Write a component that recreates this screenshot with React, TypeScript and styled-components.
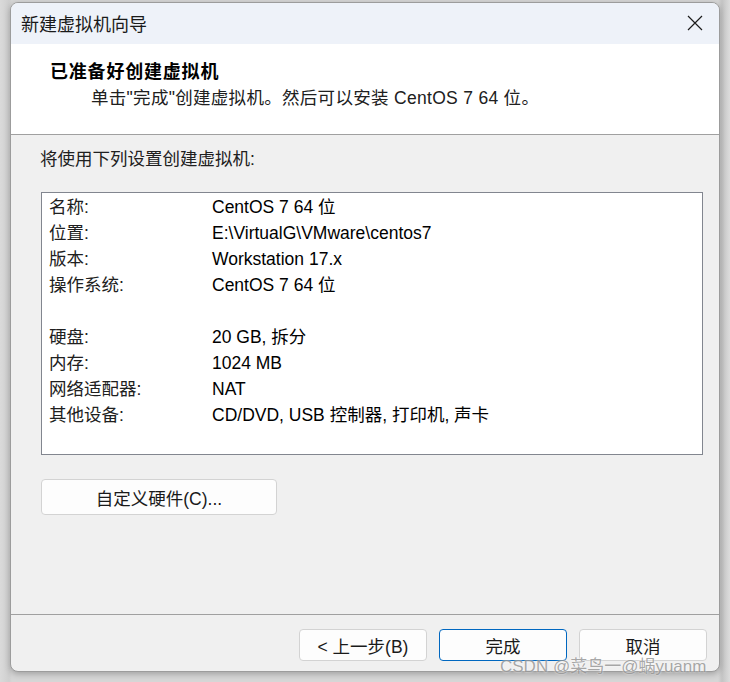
import React from "react";
import styled, { createGlobalStyle } from "styled-components";

const GlobalStyle = createGlobalStyle`
  html, body {
    margin: 0;
    padding: 0;
    width: 730px;
    height: 682px;
    overflow: hidden;
    background: #d3d3d3;
  }
  * { box-sizing: border-box; }
`;

const FONT = `"Liberation Sans", "Noto Sans CJK SC", sans-serif`;

const Desktop = styled.div`
  position: relative;
  width: 730px;
  height: 682px;
  padding: 2px 10px 0 10px;
  background: linear-gradient(90deg, #dadada 0px, #cfcfcf 9px, #d6d6d6 12px, #d6d6d6 718px, #c4c4c4 722px, #dcdcdc 730px);
  font-family: ${FONT};
`;

const Dialog = styled.div`
  width: 710px;
  height: 670px;
  border: 1px solid #9c9c9c;
  border-radius: 8px;
  overflow: hidden;
  display: flex;
  flex-direction: column;
  background: #f0f0f0;
  box-shadow: 0 2px 6px rgba(0, 0, 0, 0.25);
`;

const TitleBar = styled.div`
  height: 41px;
  flex: none;
  display: flex;
  align-items: center;
  justify-content: space-between;
  padding: 0 16px 0 10px;
  background: #eef2f9;
`;

const TitleText = styled.span`
  font-family: "Noto Sans CJK SC", sans-serif;
  font-size: 18px;
  color: #1a1a1a;
  margin-top: -2px;
`;

const CloseButton = styled.div`
  width: 16px;
  height: 16px;
  display: flex;
  margin-top: -2px;
`;

const Header = styled.div`
  height: 91px;
  flex: none;
  background: #ffffff;
  border-bottom: 1px solid #a0a0a0;
  padding: 14px 0 0 39px;
`;

const Heading = styled.div`
  font-family: "Noto Sans CJK SC", sans-serif;
  font-size: 18px;
  font-weight: bold;
  letter-spacing: 0.8px;
  line-height: 24px;
  color: #000;
`;

const SubHeading = styled.div`
  margin: 4px 0 0 41px;
  font-size: 17.5px;
  line-height: 24px;
  letter-spacing: 0.3px;
  color: #202020;
`;

const Body = styled.div`
  flex: 1;
  padding: 12px 0 0 29px;
`;

const Intro = styled.div`
  font-size: 17.5px;
  line-height: 24px;
  color: #202020;
`;

const ListBox = styled.div`
  margin: 21px 0 0 1px;
  width: 662px;
  height: 263px;
  background: #ffffff;
  border: 1px solid #82868f;
  padding: 1px 0 0 7px;
`;

const Row = styled.div`
  display: flex;
  height: 26px;
  line-height: 26px;
  font-size: 17.5px;
`;

const Label = styled.span`
  width: 163px;
  flex: none;
  color: #202020;
`;

const Value = styled.span`
  color: #000;
  white-space: nowrap;
`;

const WinButton = styled.button<{ primary?: boolean }>`
  font-family: ${FONT};
  font-size: 17.5px;
  color: #1a1a1a;
  background: #fdfdfd;
  border: 1px solid ${p => (p.primary ? "#0067c0" : "#d3d3d3")};
  border-radius: 4px;
  padding: 0;
  display: flex;
  align-items: center;
  justify-content: center;
`;

const CustomButton = styled(WinButton)`
  margin: 24px 0 0 1px;
  width: 236px;
  height: 36px;
`;

const Footer = styled.div`
  height: 57px;
  flex: none;
  border-top: 1px solid #a0a0a0;
  display: flex;
  justify-content: flex-end;
  align-items: flex-start;
  gap: 12px;
  padding: 14px 12px 0 0;
`;

const FooterButton = styled(WinButton)`
  width: 128px;
  height: 32px;
`;

const Watermark = styled.div`
  position: absolute;
  left: 500px;
  top: 652px;
  font-family: "Liberation Sans", "Noto Sans CJK SC", sans-serif;
  font-size: 17px;
  color: rgba(130, 130, 130, 0.7);
  text-shadow: 0 0 2px rgba(255, 255, 255, 0.9);
  white-space: nowrap;
  pointer-events: none;
`;

const rows: [string, string][] = [
  ["名称:", "CentOS 7 64 位"],
  ["位置:", "E:\\VirtualG\\VMware\\centos7"],
  ["版本:", "Workstation 17.x"],
  ["操作系统:", "CentOS 7 64 位"],
  ["", ""],
  ["硬盘:", "20 GB, 拆分"],
  ["内存:", "1024 MB"],
  ["网络适配器:", "NAT"],
  ["其他设备:", "CD/DVD, USB 控制器, 打印机, 声卡"],
];

export default function App() {
  return (
    <Desktop>
      <GlobalStyle />
      <Dialog>
        <TitleBar>
          <TitleText>新建虚拟机向导</TitleText>
          <CloseButton>
            <svg width="16" height="16" viewBox="0 0 16 16">
              <path d="M1 1 L15 15 M15 1 L1 15" stroke="#1c1c1c" strokeWidth="1.2" fill="none" />
            </svg>
          </CloseButton>
        </TitleBar>
        <Header>
          <Heading>已准备好创建虚拟机</Heading>
          <SubHeading>单击"完成"创建虚拟机。然后可以安装 CentOS 7 64 位。</SubHeading>
        </Header>
        <Body>
          <Intro>将使用下列设置创建虚拟机:</Intro>
          <ListBox>
            {rows.map(([label, value], i) => (
              <Row key={i}>
                <Label>{label}</Label>
                <Value>{value}</Value>
              </Row>
            ))}
          </ListBox>
          <CustomButton>自定义硬件(C)...</CustomButton>
        </Body>
        <Footer>
          <FooterButton>&lt; 上一步(B)</FooterButton>
          <FooterButton primary>完成</FooterButton>
          <FooterButton>取消</FooterButton>
        </Footer>
      </Dialog>
      <Watermark>CSDN @菜鸟一@蜗yuanm</Watermark>
    </Desktop>
  );
}
